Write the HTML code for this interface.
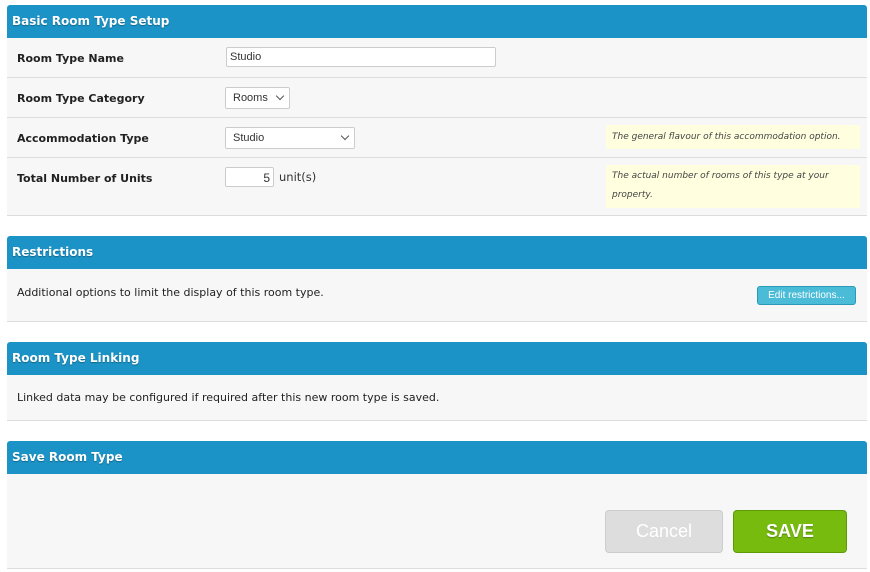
<!DOCTYPE html><html><head><style>
body{margin:0;background:#fff;font-family:"DejaVu Sans","Liberation Sans",sans-serif;font-size:11px;color:#333}
.p{position:absolute;left:7px;width:860px;background:#f7f7f7;border-bottom:1px solid #ddd}
.h{position:absolute;left:7px;width:860px;height:33px;background:#1b93c6;color:#fff;font-weight:bold;font-size:12px;line-height:33px;text-indent:5px;border-radius:3px 3px 0 0;text-shadow:0 1px 1px rgba(0,0,0,.3)}
.r{position:absolute;left:0;width:860px;border-bottom:1px solid #ddd}
.l{position:absolute;left:10px;font-weight:bold;font-size:11px;color:#222}
.in{position:absolute;background:#fff;border:1px solid #ccc;border-radius:2px;font-family:"Liberation Sans",sans-serif;font-size:11px;box-sizing:border-box}
.hint{position:absolute;background:#ffffe0;font-style:italic;font-size:9px;color:#444;padding:0 6px;line-height:19px;box-sizing:border-box}
.ch{position:absolute;right:6px;top:5px;width:5px;height:5px;border-right:1.5px solid #555;border-bottom:1.5px solid #555;transform:rotate(45deg)}
.t{position:absolute;left:10px;font-size:11px;color:#222}
</style></head><body>
<div class="h" style="top:5px">Basic Room Type Setup</div>
<div class="p" style="top:38px;height:177px">
 <div class="r" style="top:0;height:39px"><div class="l" style="top:14px">Room Type Name</div>
  <div class="in" style="left:219px;top:9px;width:270px;height:20px;padding:3px 3px">Studio</div></div>
 <div class="r" style="top:40px;height:39px"><div class="l" style="top:14px">Room Type Category</div>
  <div class="in" style="left:218px;top:9px;width:65px;height:22px;padding:4px 7px;font-size:11px">Rooms<span class="ch"></span></div></div>
 <div class="r" style="top:80px;height:39px"><div class="l" style="top:14px">Accommodation Type</div>
  <div class="in" style="left:218px;top:9px;width:130px;height:22px;padding:4px 7px">Studio<span class="ch"></span></div>
  <div class="hint" style="left:599px;top:7px;width:254px;height:24px;line-height:24px">The general flavour of this accommodation option.</div></div>
 <div class="r" style="top:120px;height:57px;border:0"><div class="l" style="top:14px">Total Number of Units</div>
  <div class="in" style="left:218px;top:9px;width:49px;height:20px;padding:3px 3px;text-align:right;font-size:12px">5</div>
  <div style="position:absolute;left:272px;top:12px;font-size:11.5px">unit(s)</div>
  <div class="hint" style="left:599px;top:7px;width:254px;height:43px;padding-top:2px">The actual number of rooms of this type at your property.</div></div>
</div>
<div class="h" style="top:236px">Restrictions</div>
<div class="p" style="top:269px;height:52px"><div class="t" style="top:17px">Additional options to limit the display of this room type.</div>
 <div style="position:absolute;left:750px;top:17px;width:97px;height:17px;background:#4bbcd8;border:1px solid #2a9ab8;border-radius:3px;color:#fff;font-family:'Liberation Sans',sans-serif;font-size:10px;text-align:center;line-height:17px">Edit restrictions...</div></div>
<div class="h" style="top:342px">Room Type Linking</div>
<div class="p" style="top:375px;height:45px"><div class="t" style="top:16px">Linked data may be configured if required after this new room type is saved.</div></div>
<div class="h" style="top:441px">Save Room Type</div>
<div class="p" style="top:474px;height:94px">
 <div style="position:absolute;left:598px;top:36px;width:116px;height:41px;background:#ddd;border:1px solid #ccc;border-radius:4px;color:#fff;font-family:'Liberation Sans',sans-serif;font-size:18px;text-align:center;line-height:41px">Cancel</div>
 <div style="position:absolute;left:726px;top:36px;width:112px;height:41px;background:#77bb0f;border:1px solid #5c9a08;border-radius:4px;color:#fff;font-family:'Liberation Sans',sans-serif;font-weight:bold;font-size:18px;text-align:center;line-height:41px;text-shadow:0 1px 1px rgba(0,0,0,.3)">SAVE</div>
</div>
</body></html>
